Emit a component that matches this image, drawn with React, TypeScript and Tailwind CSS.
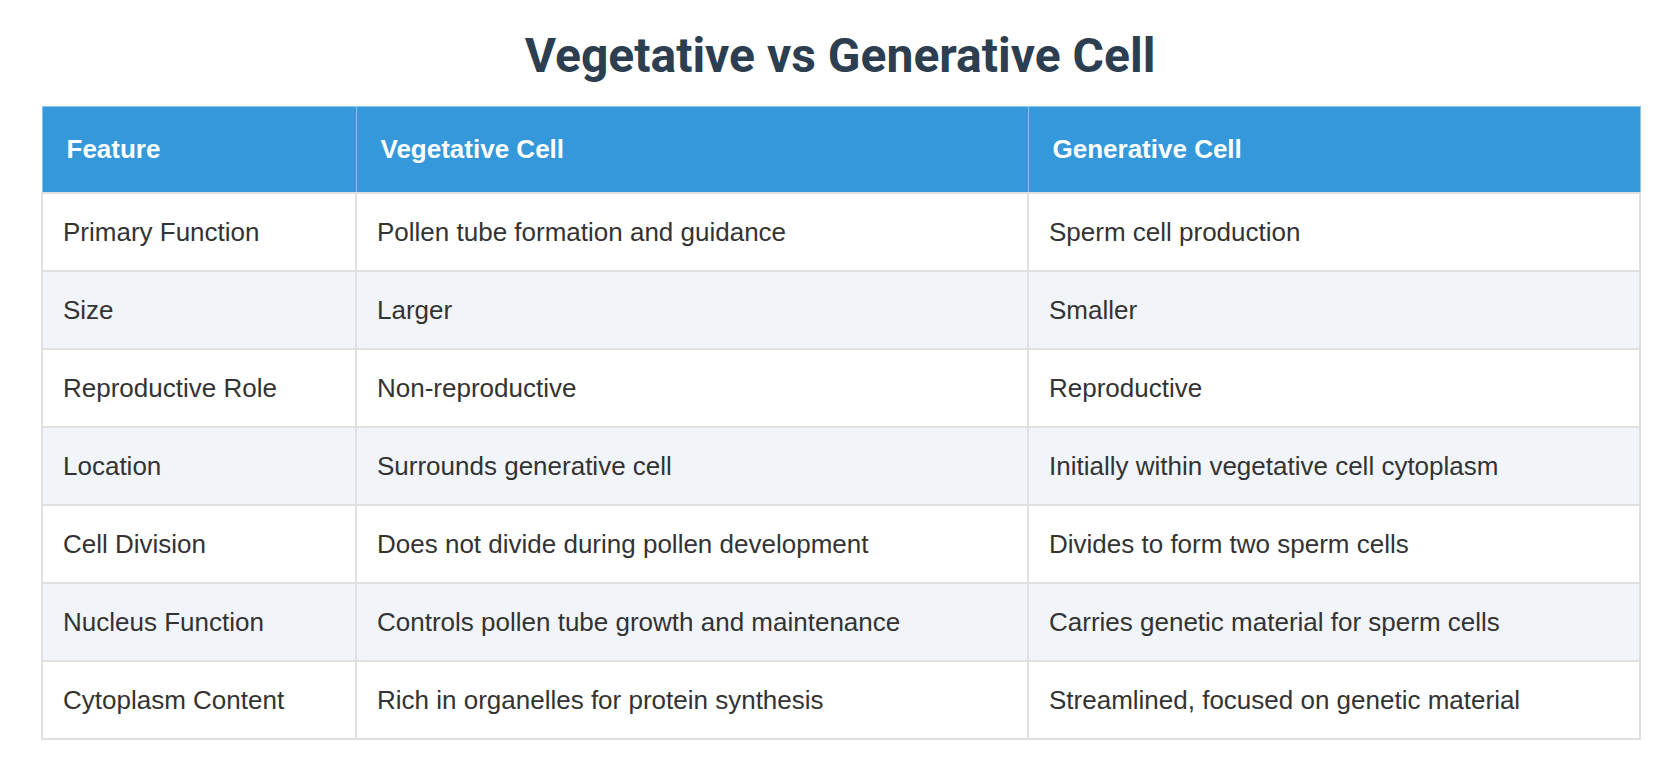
import React from "react";

const rows: [string, string, string][] = [
  ["Primary Function", "Pollen tube formation and guidance", "Sperm cell production"],
  ["Size", "Larger", "Smaller"],
  ["Reproductive Role", "Non-reproductive", "Reproductive"],
  ["Location", "Surrounds generative cell", "Initially within vegetative cell cytoplasm"],
  ["Cell Division", "Does not divide during pollen development", "Divides to form two sperm cells"],
  ["Nucleus Function", "Controls pollen tube growth and maintenance", "Carries genetic material for sperm cells"],
  ["Cytoplasm Content", "Rich in organelles for protein synthesis", "Streamlined, focused on genetic material"],
];

export default function App() {
  return (
    <div className="min-h-[782px] w-[1680px] bg-white px-[41px] pt-[28px] font-['Liberation_Sans',Arial,sans-serif]">
      <h1 className="m-0 text-center font-['Roboto',sans-serif] text-[48px] font-bold leading-[56px] text-[#2c3e50]">
        Vegetative vs Generative Cell
      </h1>
      <table className="mt-[22px] w-[1598px] table-fixed border-collapse text-[26px]">
        <colgroup>
          <col className="w-[314px]" />
          <col className="w-[672px]" />
          <col className="w-[612px]" />
        </colgroup>
        <thead>
          <tr className="h-[86px] bg-[#3498db]">
            {["Feature", "Vegetative Cell", "Generative Cell"].map((h) => (
              <th
                key={h}
                className="border border-[#8ec5ee] pl-[24px] text-left align-middle font-bold text-white"
              >
                {h}
              </th>
            ))}
          </tr>
        </thead>
        <tbody>
          {rows.map((r, i) => (
            <tr key={r[0]} className={`h-[78px] ${i % 2 === 1 ? "bg-[#f1f4f9]" : "bg-white"}`}>
              {r.map((c, j) => (
                <td
                  key={j}
                  className="border-2 border-[#e0e0e0] pl-[20px] pt-[2px] align-middle text-[#333333]"
                >
                  {c}
                </td>
              ))}
            </tr>
          ))}
        </tbody>
      </table>
    </div>
  );
}
